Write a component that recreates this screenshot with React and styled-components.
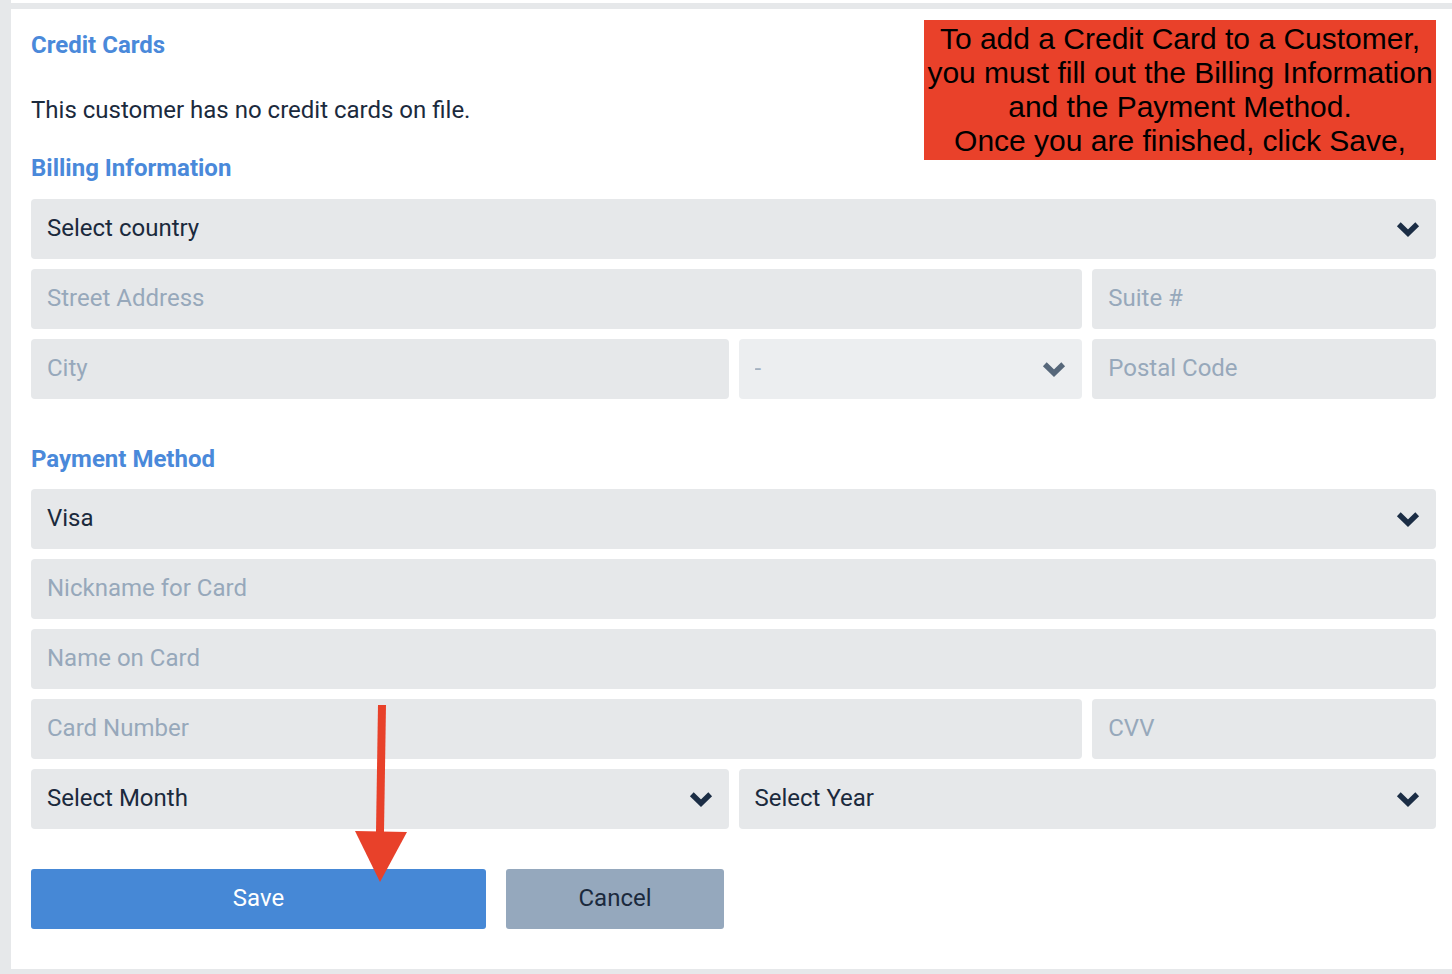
import React from "react";
import styled, { createGlobalStyle } from "styled-components";

const GlobalStyle = createGlobalStyle`
  html, body { margin: 0; padding: 0; }
  body {
    background: #e6e8ea;
    font-family: Roboto, "Liberation Sans", Arial, sans-serif;
  }
  * { box-sizing: border-box; }
`;

const Page = styled.div`
  display: flex;
  flex-direction: column;
  padding-left: 11px;
  height: 974px;
  overflow: hidden;
`;

const TopStrip = styled.div`
  height: 3px;
  background: #ffffff;
  margin-bottom: 6px;
  flex: none;
`;

const Panel = styled.div`
  position: relative;
  background: #ffffff;
  height: 960px;
  flex: none;
  padding: 16px 16px 0 20px;
  display: flex;
  flex-direction: column;
`;

const SectionTitle = styled.h2`
  margin: ${(p) => p.$mt || 0}px 0 0 0;
  font-size: 24px;
  line-height: 28px;
  font-weight: 700;
  color: #4a89da;
  padding-top: ${(p) => p.$pt || 0}px;
`;

const Note = styled.p`
  margin: 37px 0 0 0;
  font-size: 24px;
  line-height: 28px;
  color: #1b2a3d;
`;

const Grid = styled.div`
  display: grid;
  grid-template-columns: repeat(4, 1fr);
  gap: 10px;
  margin-top: ${(p) => p.$mt || 0}px;
`;

const fieldBase = `
  width: 100%;
  height: 60px;
  border: none;
  border-radius: 4px;
  padding: 0 16px 2px 16px;
  font-family: Roboto, "Liberation Sans", Arial, sans-serif;
  font-size: 24px;
  outline: none;
  margin: 0;
`;

const Input = styled.input`
  ${fieldBase}
  grid-column: span ${(p) => p.$span || 4};
  background: #e6e8ea;
  color: #1b2a3d;
  &::placeholder { color: #97a8bb; opacity: 1; }
`;

const SelectWrap = styled.div`
  position: relative;
  grid-column: span ${(p) => p.$span || 4};
`;

const Select = styled.select`
  ${fieldBase}
  appearance: none;
  -webkit-appearance: none;
  background: ${(p) => (p.$muted ? "#eceef0" : "#e6e8ea")};
  color: ${(p) => (p.$muted ? "#a3b1c0" : "#1b2a3d")};
`;

const ChevronSlot = styled.span`
  position: absolute;
  right: 16px;
  top: 50%;
  transform: translateY(-50%);
  display: flex;
  pointer-events: none;
  color: ${(p) => (p.$muted ? "#56677a" : "#1b2d45")};
`;

const Chevron = () => (
  <svg width="24" height="16" viewBox="0 0 24 16">
    <polyline
      points="2.8,3.2 12,12.2 21.2,3.2"
      fill="none"
      stroke="currentColor"
      strokeWidth="5.4"
      strokeLinejoin="miter"
    />
  </svg>
);

const Dropdown = ({ span, muted, options }) => (
  <SelectWrap $span={span}>
    <Select $muted={muted} defaultValue={options[0]}>
      {options.map((o) => (
        <option key={o}>{o}</option>
      ))}
    </Select>
    <ChevronSlot $muted={muted}>
      <Chevron />
    </ChevronSlot>
  </SelectWrap>
);

const Actions = styled.div`
  display: flex;
  gap: 20px;
  margin-top: 40px;
`;

const Button = styled.button`
  height: 60px;
  width: ${(p) => p.$w}px;
  border: none;
  border-radius: 3px;
  padding: 0 0 2px 0;
  font-family: Roboto, "Liberation Sans", Arial, sans-serif;
  font-size: 24px;
  background: ${(p) => (p.$primary ? "#4688d6" : "#95a8bd")};
  color: ${(p) => (p.$primary ? "#ffffff" : "#1b2a3d")};
  cursor: pointer;
`;

const Callout = styled.div`
  position: absolute;
  top: 11px;
  right: 16px;
  width: 512px;
  height: 140px;
  background: #e9412a;
  color: #000000;
  font-family: "Liberation Sans", Arial, sans-serif;
  font-size: 30px;
  line-height: 34px;
  text-align: center;
  padding-top: 2px;
`;

const ArrowOverlay = styled.svg`
  position: absolute;
  left: 334px;
  top: 696px;
  pointer-events: none;
`;

export default function App() {
  return (
    <>
      <GlobalStyle />
      <Page>
        <TopStrip />
        <Panel>
          <SectionTitle $pt={6}>Credit Cards</SectionTitle>
          <Note>This customer has no credit cards on file.</Note>
          <SectionTitle $mt={30}>Billing Information</SectionTitle>

          <Grid $mt={17}>
            <Dropdown span={4} options={["Select country"]} />
            <Input $span={3} placeholder="Street Address" />
            <Input $span={1} placeholder="Suite #" />
            <Input $span={2} placeholder="City" />
            <Dropdown span={1} muted options={["-"]} />
            <Input $span={1} placeholder="Postal Code" />
          </Grid>

          <SectionTitle $mt={46}>Payment Method</SectionTitle>

          <Grid $mt={16}>
            <Dropdown span={4} options={["Visa"]} />
            <Input $span={4} placeholder="Nickname for Card" />
            <Input $span={4} placeholder="Name on Card" />
            <Input $span={3} placeholder="Card Number" />
            <Input $span={1} placeholder="CVV" />
            <Dropdown span={2} options={["Select Month"]} />
            <Dropdown span={2} options={["Select Year"]} />
          </Grid>

          <Actions>
            <Button $primary $w={455}>Save</Button>
            <Button $w={218}>Cancel</Button>
          </Actions>

          <Callout>
            To add a Credit Card to a Customer,
            <br />
            you must fill out the Billing Information
            <br />
            and the Payment Method.
            <br />
            Once you are finished, click Save,
          </Callout>

          <ArrowOverlay width="64" height="190" viewBox="0 0 64 190">
            <polygon points="33,0 41,0 39,127 31,127" fill="#e8412a" />
            <polygon points="10,126 62,127 35,177" fill="#e8412a" />
          </ArrowOverlay>
        </Panel>
      </Page>
    </>
  );
}
